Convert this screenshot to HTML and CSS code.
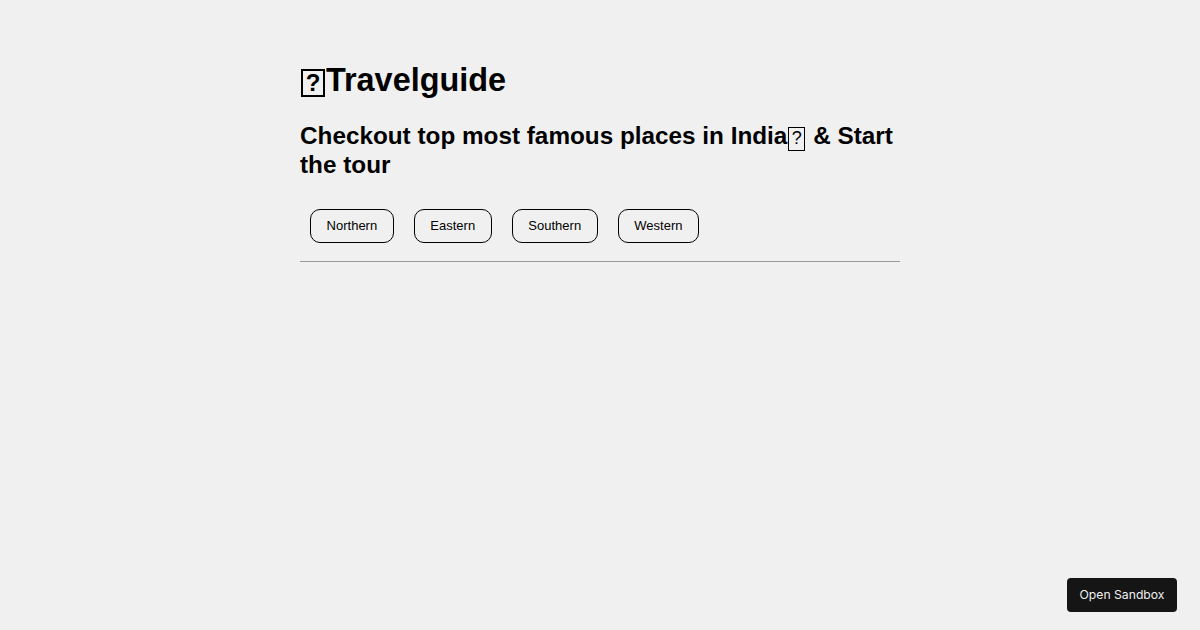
FILE: index.html
```html
<!DOCTYPE html>
<html>
<head>
<meta charset="utf-8">
<link rel="stylesheet" href="styles.css">
</head>
<body>
<div class="app">
  <h1 class="title"><span class="tofu tofu-lg">?</span>Travelguide</h1>
  <h2 class="subtitle">Checkout top most famous places in India<span class="tofu tofu-md">?</span> &amp; Start the tour</h2>
  <div class="regions">
    <button class="region">Northern</button>
    <button class="region">Eastern</button>
    <button class="region">Southern</button>
    <button class="region">Western</button>
  </div>
  <hr class="divider">
</div>
<a class="sandbox">Open Sandbox</a>
</body>
</html>
```
FILE: styles.css
```css
html, body {
  margin: 0;
  padding: 0;
  background: #f0f0f0;
}
body {
  font-family: "Liberation Sans", Arial, sans-serif;
  color: #000;
  height: 630px;
}
.app {
  width: 600px;
  margin: 0 auto;
  padding-top: 60px;
}
.title {
  font-size: 32.4px;
  font-weight: bold;
  margin: 0 0 22px 0;
  line-height: 40px;
}
.subtitle {
  font-size: 24.3px;
  font-weight: bold;
  margin: 0 0 30px 0;
  line-height: 28px;
}
.tofu {
  display: inline-block;
  text-align: center;
  box-sizing: border-box;
  border: 2px solid #000;
}
.tofu-lg {
  width: 24px;
  height: 28px;
  font-size: 24px;
  line-height: 24px;
  margin: 0 1px 0 1px;
}
.tofu-md {
  width: 17px;
  height: 24px;
  border-width: 1.5px;
  font-size: 18px;
  line-height: 21px;
  font-weight: normal;
  margin: 0 1px 0 1px;
}
.regions {
  display: flex;
  gap: 20px;
  padding-left: 10px;
}
.region {
  font-family: "Liberation Sans", Arial, sans-serif;
  font-size: 13px;
  line-height: 16px;
  padding: 8px 15.6px;
  background: transparent;
  border: 1px solid #000;
  border-radius: 10px;
  color: #000;
}
.divider {
  border: none;
  border-top: 1px solid #999;
  margin: 18px 0 0 0;
}
.sandbox {
  position: fixed;
  right: 23px;
  bottom: 18px;
  background: #151515;
  color: #f0f0f0;
  font-family: Inter, "Liberation Sans", sans-serif;
  font-size: 12.2px;
  line-height: 34px;
  padding: 0 12.5px;
  border-radius: 4px;
}
```
